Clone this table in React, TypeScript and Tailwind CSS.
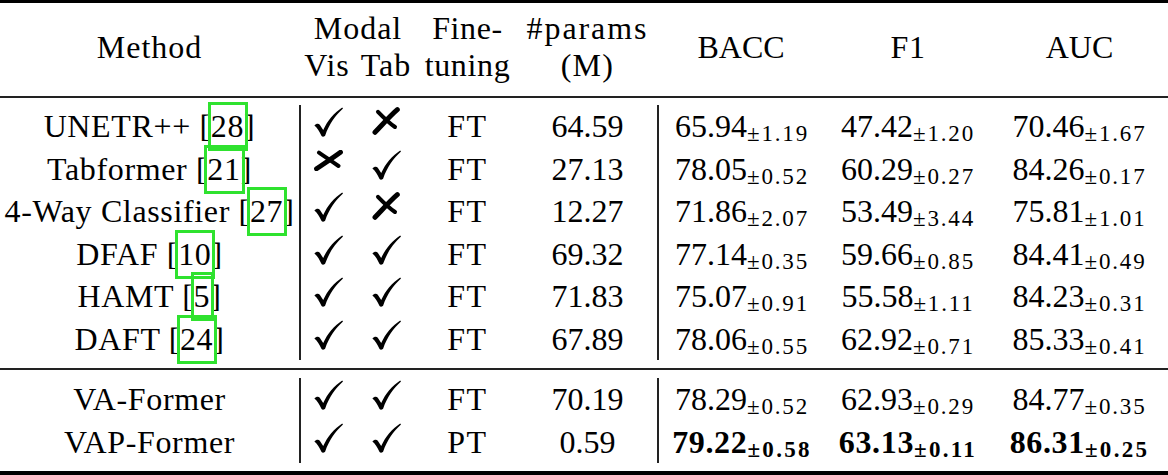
import React from "react";

const cols = "grid grid-cols-[299px_56px_62px_101px_139px_168px_166px_177px]";

type Row = {
  name: string;
  cite: string;
  vis: boolean;
  tab: boolean;
  tune: string;
  params: string;
  bacc: [string, string];
  f1: [string, string];
  auc: [string, string];
  bold?: boolean;
};

const baselines: Row[] = [
  { name: "UNETR++", cite: "28", vis: true, tab: false, tune: "FT", params: "64.59", bacc: ["65.94", "1.19"], f1: ["47.42", "1.20"], auc: ["70.46", "1.67"] },
  { name: "Tabformer", cite: "21", vis: false, tab: true, tune: "FT", params: "27.13", bacc: ["78.05", "0.52"], f1: ["60.29", "0.27"], auc: ["84.26", "0.17"] },
  { name: "4-Way Classifier", cite: "27", vis: true, tab: false, tune: "FT", params: "12.27", bacc: ["71.86", "2.07"], f1: ["53.49", "3.44"], auc: ["75.81", "1.01"] },
  { name: "DFAF", cite: "10", vis: true, tab: true, tune: "FT", params: "69.32", bacc: ["77.14", "0.35"], f1: ["59.66", "0.85"], auc: ["84.41", "0.49"] },
  { name: "HAMT", cite: "5", vis: true, tab: true, tune: "FT", params: "71.83", bacc: ["75.07", "0.91"], f1: ["55.58", "1.11"], auc: ["84.23", "0.31"] },
  { name: "DAFT", cite: "24", vis: true, tab: true, tune: "FT", params: "67.89", bacc: ["78.06", "0.55"], f1: ["62.92", "0.71"], auc: ["85.33", "0.41"] },
];

const ours: Row[] = [
  { name: "VA-Former", cite: "", vis: true, tab: true, tune: "FT", params: "70.19", bacc: ["78.29", "0.52"], f1: ["62.93", "0.29"], auc: ["84.77", "0.35"] },
  { name: "VAP-Former", cite: "", vis: true, tab: true, tune: "PT", params: "0.59", bacc: ["79.22", "0.58"], f1: ["63.13", "0.11"], auc: ["86.31", "0.25"], bold: true },
];

const Check = () => (
  <svg width="29" height="30" viewBox="0 0 29 30">
    <path
      d="M0.4 18.4 C2 16.8 4.4 16.2 5.8 17.8 L9.2 23 C13.4 13.6 20 5.8 28.2 0.4 L29 1.6 C21.4 8.4 15.2 17.2 11.2 28.6 C10.6 30 8 30.1 7.4 28.8 C5.4 24.4 3.4 21 0.4 18.4 Z"
      fill="black"
    />
  </svg>
);

// tall cross in the Tab column, flat one in the Vis column
const Cross = ({ flat }: { flat?: boolean }) =>
  flat ? (
    <svg width="29" height="21" viewBox="0 0 29 21">
      <path d="M26.5 2.2 C20 7 11 13 2.5 18.8" stroke="black" strokeWidth="4.8" strokeLinecap="round" fill="none" />
      <path d="M5 2.6 C11 6.5 17 11 24.5 16" stroke="black" strokeWidth="4" strokeLinecap="round" fill="none" />
    </svg>
  ) : (
    <svg width="28" height="28" viewBox="0 0 28 28">
      <path d="M25.3 2.7 C19 8 11 17 3 25.3" stroke="black" strokeWidth="5" strokeLinecap="round" fill="none" />
      <path d="M6 4.8 C11 10 16 15 23 20" stroke="black" strokeWidth="4" strokeLinecap="round" fill="none" />
    </svg>
  );

const Score = ({ v, s, bold }: { v: string; s: string; bold?: boolean }) => (
  <span className={bold ? "font-bold tracking-[0.02em]" : ""}>
    {v}
    <span className={bold ? "text-[23px] leading-none align-[-4px] tracking-[0.1em]" : "text-[23px] leading-none align-[-4px] tracking-[0.08em]"}>
      ±{s}
    </span>
  </span>
);

const TableRow = ({ r }: { r: Row }) => (
  <div className={`${cols} h-[42.5px] leading-[42.5px] text-center whitespace-nowrap`}>
    <div className="tracking-[0.02em]">
      {r.name}
      {r.cite && (
        <>
          {" ["}
          <span className="relative">
            {r.cite}
            <span className="absolute -left-[3px] -right-[4px] -top-[6px] -bottom-[7px] border-[3px] border-[#2fe22f]" />
          </span>
          ]
        </>
      )}
    </div>
    <div className="flex justify-center items-start pt-[2px] border-l-2 border-[#222]">
      {r.vis ? <Check /> : <Cross flat />}
    </div>
    <div className="flex justify-center items-start pt-[2px]">{r.tab ? <Check /> : <Cross />}</div>
    <div className="tracking-[0.05em]">{r.tune}</div>
    <div>{r.params}</div>
    <div className="border-l-2 border-[#222]">
      <Score v={r.bacc[0]} s={r.bacc[1]} bold={r.bold} />
    </div>
    <div>
      <Score v={r.f1[0]} s={r.f1[1]} bold={r.bold} />
    </div>
    <div>
      <Score v={r.auc[0]} s={r.auc[1]} bold={r.bold} />
    </div>
  </div>
);

export default function App() {
  return (
    <div className="w-[1168px] h-[475px] bg-white text-black font-['Liberation_Serif',serif] text-[32px] overflow-hidden">
      <div className="h-[3px] bg-black" />

      <div className={`${cols} grid-rows-[37px_37px] leading-[37px] pt-[7px] pb-[12px] text-center whitespace-nowrap`}>
        <div className="row-span-2 flex items-center justify-center tracking-[0.03em]">Method</div>
        <div className="col-span-2 tracking-[0.03em]">Modal</div>
        <div className="row-span-2 tracking-[0.02em]">
          <div>Fine-</div>
          <div>tuning</div>
        </div>
        <div className="row-span-2">
          <div className="tracking-[0.06em]">#params</div>
          <div className="tracking-[0.04em]">(M)</div>
        </div>
        <div className="row-span-2 flex items-center justify-center">BACC</div>
        <div className="row-span-2 flex items-center justify-center tracking-[0.02em]">F1</div>
        <div className="row-span-2 flex items-center justify-center">AUC</div>
        <div className="tracking-[0.03em]">Vis</div>
        <div className="tracking-[0.03em]">Tab</div>
      </div>

      <div className="h-[2px] bg-[#222]" />

      <div className="pt-[7px] pb-[8px]">
        {baselines.map((r) => (
          <TableRow key={r.name} r={r} />
        ))}
      </div>

      <div className="h-[2px] bg-[#222]" />

      <div className="pt-[8px] pb-[8px]">
        {ours.map((r) => (
          <TableRow key={r.name} r={r} />
        ))}
      </div>

      <div className="h-[4px] bg-black" />
    </div>
  );
}
